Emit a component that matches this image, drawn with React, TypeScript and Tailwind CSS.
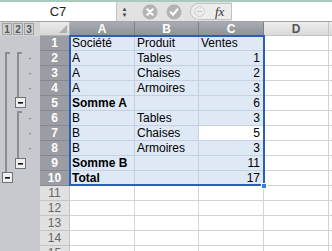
import React from 'react';

type Row = { a: string; b: string; c: string; bold?: boolean; num?: boolean };

const rows: Row[] = [
  { a: 'Société', b: 'Produit', c: 'Ventes' },
  { a: 'A', b: 'Tables', c: '1', num: true },
  { a: 'A', b: 'Chaises', c: '2', num: true },
  { a: 'A', b: 'Armoires', c: '3', num: true },
  { a: 'Somme A', b: '', c: '6', bold: true, num: true },
  { a: 'B', b: 'Tables', c: '3', num: true },
  { a: 'B', b: 'Chaises', c: '5', num: true },
  { a: 'B', b: 'Armoires', c: '3', num: true },
  { a: 'Somme B', b: '', c: '11', bold: true, num: true },
  { a: 'Total', b: '', c: '17', bold: true, num: true },
];

function FormulaBar() {
  return (
    <div className="flex h-[22px] border-t-2 border-[#a9cbbd] border-b border-b-[#a3a3a3] bg-[#e2e2e2]">
      <div className="flex w-[116px] items-center justify-center bg-white text-[13px] text-[#222]">C7</div>
      <div className="flex w-[16px] flex-col items-center justify-center border-l border-[#c4c4c4] text-[6px] leading-[6px] text-[#444]">
        <span>▲</span>
        <span>▼</span>
      </div>
      <div className="flex items-center gap-[8px] pl-[10px]">
        <svg width="16" height="16" viewBox="0 0 16 16">
          <circle cx="8" cy="8" r="7.5" fill="#b3b3b3" />
          <path d="M5.3 5.3 L10.7 10.7 M10.7 5.3 L5.3 10.7" stroke="#fff" strokeWidth="2.2" strokeLinecap="round" />
        </svg>
        <svg width="16" height="16" viewBox="0 0 16 16">
          <circle cx="8" cy="8" r="7.5" fill="#b3b3b3" />
          <path d="M4.6 8.3 L7 10.6 L11.4 5.5" stroke="#fff" strokeWidth="2.2" fill="none" strokeLinecap="round" />
        </svg>
      </div>
      <div className="ml-[8px] flex h-[17px] w-[42px] items-center self-center rounded-l-full border border-[#c2c2c2] bg-[#ececec]">
        <div className="ml-[3px] flex h-[11px] w-[11px] items-center justify-center rounded-full border border-[#d0d0d0]">
          <div className="h-[1px] w-[5px] bg-[#c8c8c8]" />
        </div>
        <span className="ml-[10px] font-['Liberation_Serif',serif] text-[13px] italic text-[#333]">fx</span>
      </div>
      <div className="flex-1 bg-white" />
    </div>
  );
}

function Gutter() {
  const line = '#8b8e94';
  const dots = [22.5, 37.5, 52.5, 82.5, 97.5, 112.5];
  const box = (x: number, y: number) => (
    <g key={`${x}-${y}`}>
      <rect x={x + 0.5} y={y + 0.5} width="10" height="10" fill="#efefef" stroke="#6f7278" />
      <rect x={x + 3} y={y + 5} width="5" height="1.6" fill="#111" />
    </g>
  );
  return (
    <div className="flex w-[40px] flex-col bg-[#c7c9ce]">
      <div className="flex h-[14px] items-center gap-[1px] bg-[#d3d4d6] pl-[2px]">
        {['1', '2', '3'].map((n) => (
          <div
            key={n}
            className="flex h-[12px] w-[10px] items-center justify-center border border-[#9fa1a5] bg-[#cfd0d2] text-[10px] font-bold text-[#555]"
          >
            {n}
          </div>
        ))}
      </div>
      <svg width="40" height="215" viewBox="0 0 40 215">
        <path d="M6 136 V17 H10" stroke={line} strokeWidth="2" fill="none" />
        <path d="M18 61 V17 H22" stroke={line} strokeWidth="2" fill="none" />
        <path d="M18 122 V76 H22" stroke={line} strokeWidth="2" fill="none" />
        {dots.map((y) => (
          <rect key={y} x="29.5" y={y - 0.5} width="1.2" height="1.2" fill="#666" />
        ))}
        {box(15, 61)}
        {box(15, 122)}
        {box(2, 136)}
      </svg>
    </div>
  );
}

export default function App() {
  const empty = [11, 12, 13, 14, 15];
  const sel = 'bg-[#dfe9f6] border-r border-b border-[#c3d1e2]';
  const plain = 'border-r border-b border-[#d3d3d3]';
  const selHead = 'bg-gradient-to-b from-[#a9acb1] to-[#8f9298] text-white border-r border-b border-[#7d8086]';
  const rowHeadSel = 'bg-[#9a9da3] text-white border-r border-b border-[#85888e]';
  const rowHead = 'bg-[#e1e1e1] text-[#666] border-r border-b border-[#c4c4c4]';

  return (
    <div className="relative h-[251px] w-[332px] overflow-hidden bg-white font-['Liberation_Sans',Arial,sans-serif] text-[12px] text-black">
      <FormulaBar />
      <div className="flex">
        <Gutter />
        <div className="relative">
          <div className="grid grid-cols-[30px_65px_64px_65px_65px_10px]">
            <div className="relative h-[14px] border-r border-b border-[#b5b5b5] bg-gradient-to-b from-[#ececec] to-[#d6d6d6]">
              <div className="absolute right-[2px] bottom-[2px] h-0 w-0 border-l-[8px] border-t-[8px] border-l-transparent border-t-transparent border-r-0 border-b-[8px] border-b-[#b0b0b0]" />
            </div>
            {['A', 'B', 'C'].map((c) => (
              <div key={c} className={`flex h-[14px] items-center justify-center text-[12px] font-bold ${selHead}`}>
                {c}
              </div>
            ))}
            <div className="flex h-[14px] items-center justify-center border-r border-b border-[#c4c4c4] bg-gradient-to-b from-[#ededed] to-[#dadada] text-[12px] font-bold text-[#555]">
              D
            </div>
            <div className="h-[14px] border-b border-[#c4c4c4] bg-gradient-to-b from-[#ededed] to-[#dadada]" />

            {rows.map((r, i) => (
              <React.Fragment key={i}>
                <div className={`flex h-[15px] items-center justify-center text-[12px] font-bold ${rowHeadSel}`}>{i + 1}</div>
                <div className={`flex h-[15px] items-center pl-[2px] ${sel} ${r.bold ? 'font-bold' : ''}`}>{r.a}</div>
                <div className={`flex h-[15px] items-center pl-[2px] ${sel}`}>{r.b}</div>
                <div
                  className={`flex h-[15px] items-center px-[3px] ${r.num ? 'justify-end' : 'justify-start pl-[2px]'} ${
                    i === 6 ? 'border-r border-b border-[#c3d1e2] bg-white' : sel
                  }`}
                >
                  {r.c}
                </div>
                <div className={`h-[15px] ${plain}`} />
                <div className="h-[15px] border-b border-[#d3d3d3]" />
              </React.Fragment>
            ))}

            {empty.map((n) => (
              <React.Fragment key={n}>
                <div className={`flex h-[15px] items-center justify-center text-[12px] ${rowHead}`}>{n}</div>
                <div className={`h-[15px] ${plain}`} />
                <div className={`h-[15px] ${plain}`} />
                <div className={`h-[15px] ${plain}`} />
                <div className={`h-[15px] ${plain}`} />
                <div className="h-[15px] border-b border-[#d3d3d3]" />
              </React.Fragment>
            ))}
          </div>

          {/* selection outline A1:C10 */}
          <div className="pointer-events-none absolute top-[13px] left-[29px] h-[151px] w-[196px] border-2 border-[#2a5fb5]" />
          <div className="pointer-events-none absolute top-[161px] left-[221px] h-[6px] w-[6px] border border-white bg-[#3b7fd4]" />
        </div>
      </div>
    </div>
  );
}
